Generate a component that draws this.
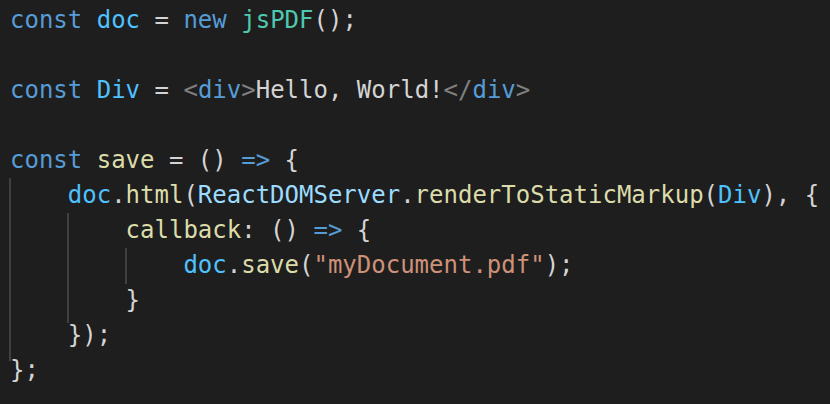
import React from "react";

const K = ({ c, children }: { c: string; children: React.ReactNode }) => (
  <span className={c}>{children}</span>
);

const kw = "text-[#569cd6]";
const vr = "text-[#4fc1ff]";
const cls = "text-[#4ec9b0]";
const pn = "text-[#d4d4d4]";
const fn = "text-[#dcdcaa]";
const tag = "text-[#808080]";
const prop = "text-[#9cdcfe]";
const str = "text-[#ce9178]";

function Line({ indent = 0, children }: { indent?: number; children?: React.ReactNode }) {
  return (
    <div className="h-[35px] whitespace-pre">
      {" ".repeat(indent)}
      {children}
    </div>
  );
}

export default function App() {
  return (
    <div className="w-[830px] h-[404px] bg-[#1e1e1e] overflow-hidden">
      <div
        className="relative pl-[10px] pt-[3px] text-[24px] leading-[35px] text-[#d4d4d4]"
        style={{ fontFamily: '"DejaVu Sans Mono", "Liberation Mono", monospace' }}
      >
        <div className="absolute left-[9px] top-[178px] h-[183px] w-[2px] bg-[#404040]" />
        <div className="absolute left-[67px] top-[213px] h-[110px] w-[2px] bg-[#404040]" />
        <div className="absolute left-[125px] top-[248px] h-[36px] w-[2px] bg-[#404040]" />
        <Line>
          <K c={kw}>const</K> <K c={vr}>doc</K> <K c={pn}>=</K> <K c={kw}>new</K>{" "}
          <K c={cls}>jsPDF</K>
          <K c={pn}>();</K>
        </Line>
        <Line />
        <Line>
          <K c={kw}>const</K> <K c={vr}>Div</K> <K c={pn}>=</K> <K c={tag}>&lt;</K>
          <K c={kw}>div</K>
          <K c={tag}>&gt;</K>
          <K c={pn}>Hello, World!</K>
          <K c={tag}>&lt;/</K>
          <K c={kw}>div</K>
          <K c={tag}>&gt;</K>
        </Line>
        <Line />
        <Line>
          <K c={kw}>const</K> <K c={fn}>save</K> <K c={pn}>= ()</K> <K c={kw}>=&gt;</K>{" "}
          <K c={pn}>{"{"}</K>
        </Line>
        <Line indent={4}>
          <K c={vr}>doc</K>
          <K c={pn}>.</K>
          <K c={fn}>html</K>
          <K c={pn}>(</K>
          <K c={prop}>ReactDOMServer</K>
          <K c={pn}>.</K>
          <K c={fn}>renderToStaticMarkup</K>
          <K c={pn}>(</K>
          <K c={vr}>Div</K>
          <K c={pn}>{"), {"}</K>
        </Line>
        <Line indent={8}>
          <K c={fn}>callback</K>
          <K c={pn}>: ()</K> <K c={kw}>=&gt;</K> <K c={pn}>{"{"}</K>
        </Line>
        <Line indent={12}>
          <K c={vr}>doc</K>
          <K c={pn}>.</K>
          <K c={fn}>save</K>
          <K c={pn}>(</K>
          <K c={str}>"myDocument.pdf"</K>
          <K c={pn}>);</K>
        </Line>
        <Line indent={8}>
          <K c={pn}>{"}"}</K>
        </Line>
        <Line indent={4}>
          <K c={pn}>{"});"}</K>
        </Line>
        <Line>
          <K c={pn}>{"};"}</K>
        </Line>
      </div>
    </div>
  );
}
